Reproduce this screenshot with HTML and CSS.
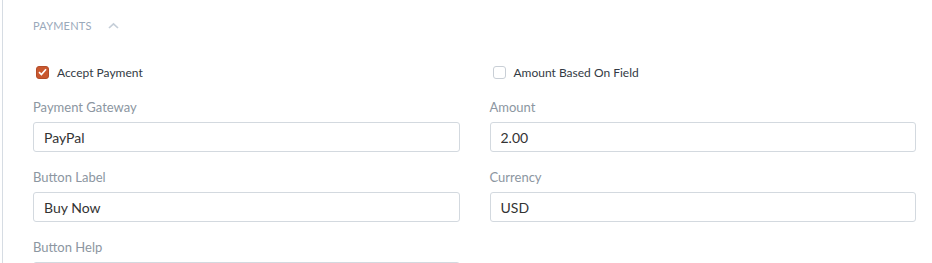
FILE: index.html
```html
<!DOCTYPE html>
<html lang="en">
<head>
    <meta charset="UTF-8">
    <title>Payments</title>
    <link rel="stylesheet" href="styles.css">
</head>
<body>
    <div class="panel">
        <div class="section-head">
            <span class="section-title">Payments</span>
            <svg class="chevron" width="11" height="7" viewBox="0 0 11 7"><path d="M1 6 L5.5 1.8 L10 6" fill="none" stroke="#c5ced8" stroke-width="1.7"/></svg>
        </div>
        <div class="fields">
            <label class="check-row">
                <span class="box checked">
                    <svg width="9" height="8" viewBox="0 0 9 8"><path d="M1 4.2 L3.4 6.5 L8 1.3" fill="none" stroke="#fff" stroke-width="1.7"/></svg>
                </span>
                Accept Payment
            </label>
            <label class="check-row">
                <span class="box"></span>
                Amount Based On Field
            </label>
            <div class="field">
                <label>Payment Gateway</label>
                <input value="PayPal">
            </div>
            <div class="field">
                <label>Amount</label>
                <input value="2.00">
            </div>
            <div class="field">
                <label>Button Label</label>
                <input value="Buy Now">
            </div>
            <div class="field">
                <label>Currency</label>
                <input value="USD">
            </div>
            <div class="field">
                <label>Button Help</label>
                <input value="">
            </div>
        </div>
    </div>
</body>
</html>
```

FILE: styles.css
```css
body {
    margin: 0;
    font-family: Lato, "Open Sans", sans-serif;
    background-color: white;
    color: #333;
    overflow: hidden;
}
.panel {
    margin-left: 2px;
    border-left: 1px solid #d6dce3;
    min-height: 263px;
    padding: 15px 16px 0 30px;
}
.section-head {
    display: flex;
    align-items: center;
    height: 20px;
}
.section-title {
    font-size: 11px;
    text-transform: uppercase;
    color: #9aa9ba;
    letter-spacing: 0.2px;
}
.chevron {
    margin-left: 16px;
}
.fields {
    display: grid;
    grid-template-columns: 1fr 1fr;
    column-gap: 30px;
    row-gap: 16px;
    margin-top: 27px;
}
.check-row {
    display: flex;
    align-items: center;
    height: 20px;
    font-size: 12px;
    color: #333a44;
    padding-left: 3px;
}
.box {
    width: 11px;
    height: 11px;
    border: 1px solid #c9cfd6;
    border-radius: 3px;
    margin-right: 8px;
    display: flex;
    align-items: center;
    justify-content: center;
    background: white;
}
.box.checked {
    background-color: #c9582f;
    border-color: #b44d29;
}
.field label {
    display: block;
    font-size: 13px;
    line-height: 18px;
    color: #8c96a1;
    margin-bottom: 6px;
}
.field input {
    display: block;
    box-sizing: border-box;
    width: 100%;
    height: 30px;
    padding: 0 10px;
    border: 1px solid #d3d9df;
    border-radius: 3px;
    font-family: inherit;
    font-size: 14px;
    color: #333;
}
```
